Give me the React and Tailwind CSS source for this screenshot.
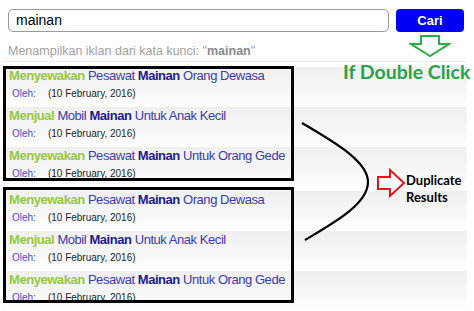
import React from 'react';

const items = [
  { verb: 'Menyewakan', pre: 'Pesawat', post: 'Orang Dewasa' },
  { verb: 'Menjual', pre: 'Mobil', post: 'Untuk Anak Kecil' },
  { verb: 'Menyewakan', pre: 'Pesawat', post: 'Untuk Orang Gede' },
];

const Item = ({ verb, pre, post }) => (
  <div className="h-[40px] bg-gradient-to-b from-[#efefef] via-[#f6f6f6] to-white pl-[6px] pt-[1px]">
    <div className="text-[13px] tracking-[-0.45px] leading-[16px] text-[#3c3ca8] whitespace-nowrap">
      <span className="font-bold text-[#96c83c]">{verb}</span> {pre}{' '}
      <span className="font-bold text-[#1c1c8a]">Mainan</span> {post}
    </div>
    <div className="mt-[3px] pl-[3px] text-[10px] leading-[13px] whitespace-nowrap">
      <span className="text-[#4a4ad0]">Oleh:</span>
      <span className="ml-[12px] text-[#222]">(10 February, 2016)</span>
    </div>
  </div>
);

const Group = ({ boxClass }) => (
  <div className="relative">
    {items.map((it, i) => (
      <Item key={i} {...it} />
    ))}
    <div className={`absolute left-0 w-[291px] border-[3px] border-black ${boxClass}`} />
  </div>
);

export default function App() {
  return (
    <div
      className="relative w-[474px] h-[311px] bg-white overflow-hidden"
      style={{ fontFamily: '"Liberation Sans", Arial, sans-serif' }}
    >
      <div className="flex items-center gap-[7px] pl-[8px] pt-[9px]">
        <div className="w-[381px] h-[23px] rounded-[5px] border border-[#9a9a9a] pl-[7px] flex items-center text-[14px] text-black">
          mainan
        </div>
        <button className="w-[68px] h-[23px] rounded-[4px] bg-[#0000f5] text-white text-[13px] font-bold">
          Cari
        </button>
      </div>

      <div className="pl-[8px] mt-[11px] text-[12.5px] leading-[16px] text-[#a0a0a0] whitespace-nowrap">
        Menampilkan iklan dari kata kunci: "<span className="font-bold text-[#8a8a8a]">mainan</span>"
      </div>
      <div className="ml-[3px] w-[464px] h-px bg-[#ececec] mt-[2px]" />

      <div className="ml-[3px] w-[464px] mt-[5px]">
        <Group boxClass="top-[-1px] bottom-[6px]" />
        <div className="h-[4px]" />
        <Group boxClass="top-[-4px] bottom-[8px]" />
      </div>

      {/* green arrow */}
      <svg className="absolute left-[409px] top-[35px]" width="42" height="22" viewBox="0 0 42 22">
        <path d="M12 1 H30 V9 H40 L21 21 L2 9 H12 Z" fill="white" stroke="#2daa4a" strokeWidth="2" />
      </svg>
      <div
        className="absolute left-[343px] top-[59px] whitespace-nowrap text-[19.5px] font-bold text-[#27a447] leading-[26px]"
        style={{ fontFamily: 'Lato, "Open Sans", sans-serif' }}
      >
        If Double Click
      </div>

      {/* bracket + red arrow */}
      <svg className="absolute left-0 top-0" width="474" height="311" viewBox="0 0 474 311">
        <path d="M302 123 C 330 140, 368 160, 368 182 C 368 205, 330 225, 305 240" fill="none" stroke="black" strokeWidth="2.2" />
        <path d="M378 177 H390 V170 L404 183 L390 196 V189 H378 Z" fill="white" stroke="#e3141c" strokeWidth="2" />
      </svg>
      <div
        className="absolute left-[406px] top-[172px] whitespace-nowrap text-[13px] font-bold text-black leading-[17px]"
        style={{ fontFamily: 'Lato, "Open Sans", sans-serif' }}
      >
        Duplicate
        <br />
        Results
      </div>
    </div>
  );
}
